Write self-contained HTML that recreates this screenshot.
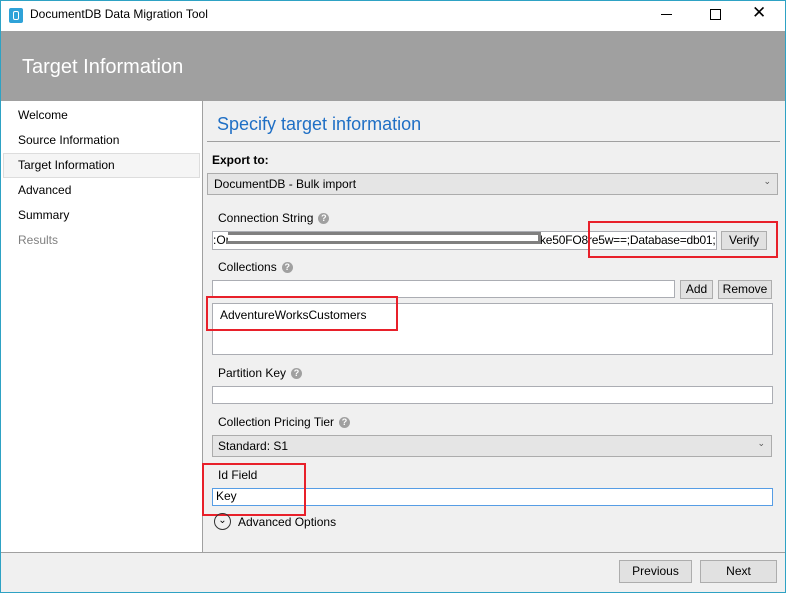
<!DOCTYPE html>
<html><head><style>
*{box-sizing:border-box;margin:0;padding:0}
body{width:786px;height:593px;overflow:hidden;font-family:"Segoe UI","Liberation Sans",sans-serif;font-size:12px;color:#000;background:#fff;position:relative}
.a{position:absolute}
.win{left:0;top:0;width:786px;height:593px;border:1px solid #2ea2c4}
.inp{background:#fff;border:1px solid #abadb3}
.btn{background:#e1e1e1;border:1px solid #adadad;text-align:center}
.red{border:2px solid #e8202a}
.q{display:inline-block;width:11px;height:11px;border-radius:50%;background:#a0a0a0;color:#fff;font-size:9px;line-height:11px;text-align:center;font-weight:bold;margin-left:5px;vertical-align:1px}
</style></head><body>
<div class="a win"></div>
<div class="a" style="left:9px;top:8px;width:14px;height:15px;background:#2ea2d8;border-radius:2px"></div>
<div class="a" style="left:13px;top:11px;width:6px;height:9px;border:1px solid #fff;border-radius:2px"></div>
<div class="a" style="left:30px;top:7px;font-size:12px">DocumentDB Data Migration Tool</div>
<div class="a" style="left:661px;top:14px;width:11px;height:1px;background:#000"></div>
<div class="a" style="left:710px;top:9px;width:11px;height:11px;border:1px solid #000"></div>
<div class="a" style="left:752px;top:3px;font-size:17px;font-weight:300">✕</div>
<div class="a" style="left:1px;top:31px;width:784px;height:70px;background:#a0a0a0"></div>
<div class="a" style="left:22px;top:56px;font-size:20px;color:#fff">Target Information</div>
<div class="a" style="left:202px;top:101px;width:583px;height:451px;background:#f0f0f0;border-left:1px solid #a0a0a0"></div>
<div class="a" style="left:1px;top:552px;width:784px;height:40px;background:#f0f0f0;border-top:1px solid #a0a0a0"></div>
<div class="a" style="left:18px;top:108px">Welcome</div>
<div class="a" style="left:18px;top:133px">Source Information</div>
<div class="a" style="left:3px;top:153px;width:197px;height:25px;background:#f5f5f5;border:1px solid #ddd"></div>
<div class="a" style="left:18px;top:158px">Target Information</div>
<div class="a" style="left:18px;top:183px">Advanced</div>
<div class="a" style="left:18px;top:208px">Summary</div>
<div class="a" style="left:18px;top:233px;color:#808080">Results</div>
<div class="a" style="left:217px;top:114px;font-size:18px;color:#1f6fc5">Specify target information</div>
<div class="a" style="left:207px;top:141px;width:573px;height:1px;background:#a0a0a0"></div>
<div class="a" style="left:212px;top:153px;font-weight:bold">Export to:</div>
<div class="a" style="left:207px;top:173px;width:571px;height:22px;background:#e5e5e5;border:1px solid #acacac;padding:3px 6px">DocumentDB - Bulk import<span style="position:absolute;right:6px;top:2px;font-size:9px;color:#555">⌄</span></div>
<div class="a" style="left:218px;top:211px">Connection String<span class="q">?</span></div>
<div class="a inp" style="left:212px;top:231px;width:505px;height:19px"></div>
<div class="a" style="left:213px;top:233px">:Or</div>
<div class="a" style="left:540px;top:233px;width:176px;overflow:hidden;white-space:nowrap;letter-spacing:-0.2px">ke50FO8re5w==;Database=db01;</div>
<div class="a" style="left:228px;top:232px;width:313px;height:12px;background:#fff;border:3px solid #808080;border-left:none"></div>
<div class="a btn" style="left:721px;top:231px;width:46px;height:19px;line-height:17px">Verify</div>
<div class="a red" style="left:588px;top:221px;width:190px;height:37px"></div>
<div class="a" style="left:218px;top:260px">Collections<span class="q">?</span></div>
<div class="a inp" style="left:212px;top:280px;width:463px;height:18px"></div>
<div class="a btn" style="left:680px;top:280px;width:33px;height:19px;line-height:17px">Add</div>
<div class="a btn" style="left:718px;top:280px;width:54px;height:19px;line-height:17px">Remove</div>
<div class="a inp" style="left:212px;top:303px;width:561px;height:52px"></div>
<div class="a" style="left:220px;top:308px">AdventureWorksCustomers</div>
<div class="a red" style="left:206px;top:296px;width:192px;height:35px"></div>
<div class="a" style="left:218px;top:366px">Partition Key<span class="q">?</span></div>
<div class="a inp" style="left:212px;top:386px;width:561px;height:18px"></div>
<div class="a" style="left:218px;top:415px">Collection Pricing Tier<span class="q">?</span></div>
<div class="a" style="left:212px;top:435px;width:560px;height:22px;background:#e5e5e5;border:1px solid #acacac;padding:3px 5px">Standard: S1<span style="position:absolute;right:6px;top:2px;font-size:9px;color:#555">⌄</span></div>
<div class="a" style="left:218px;top:468px">Id Field</div>
<div class="a" style="left:212px;top:488px;width:561px;height:18px;background:#fff;border:1px solid #569de5;padding:0 3px">Key</div>
<div class="a red" style="left:202px;top:463px;width:104px;height:53px"></div>
<div class="a" style="left:214px;top:513px;width:17px;height:17px;border:1px solid #333;border-radius:50%;text-align:center;font-size:10px;line-height:14px">⌄</div>
<div class="a" style="left:238px;top:515px">Advanced Options</div>
<div class="a btn" style="left:619px;top:560px;width:73px;height:23px;line-height:21px">Previous</div>
<div class="a btn" style="left:700px;top:560px;width:77px;height:23px;line-height:21px">Next</div>
</body></html>
